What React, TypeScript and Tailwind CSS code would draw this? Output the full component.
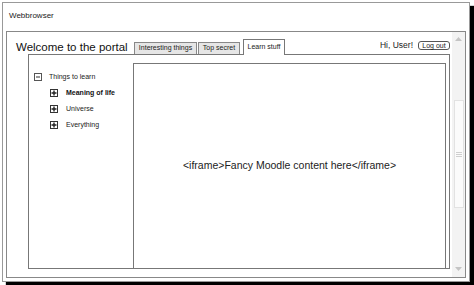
const font = { fontFamily: '"Liberation Sans", Arial, sans-serif' }

function MinusBox() {
  return (
    <svg width="8" height="8" viewBox="0 0 8 8" className="shrink-0">
      <rect x="0.5" y="0.5" width="7" height="7" fill="#fff" stroke="#555" />
      <path d="M2 4h4" stroke="#333" strokeWidth="1" />
    </svg>
  )
}

function PlusBox() {
  return (
    <svg width="8" height="8" viewBox="0 0 8 8" className="shrink-0">
      <rect x="0.5" y="0.5" width="7" height="7" fill="#fff" stroke="#333" />
      <path d="M1.5 4h5M4 1.5v5" stroke="#222" strokeWidth="1.4" />
    </svg>
  )
}

function Tab({ label, active, w }: { label: string; active?: boolean; w: string }) {
  if (active) {
    return (
      <div
        className={`${w} relative z-10 -mb-px flex h-[16px] items-center justify-center border border-b-0 border-[#777] bg-white text-[7px] text-[#222]`}
      >
        {label}
      </div>
    )
  }
  return (
    <div
      className={`${w} flex h-[12px] items-center justify-center border border-b-0 border-[#888] bg-[#e6e6e6] text-[7px] text-[#222]`}
    >
      {label}
    </div>
  )
}

const children = [
  { label: 'Meaning of life', bold: true },
  { label: 'Universe', bold: false },
  { label: 'Everything', bold: false },
]

export default function App() {
  return (
    <div className="h-[285px] w-[474px] overflow-hidden bg-white" style={font}>
      <div className="ml-[2px] mt-[2px] flex h-[280px] w-[468px] flex-col border border-[#999] bg-white shadow-[4px_4px_1px_0_#000]">
        {/* window title */}
        <div className="flex h-[28px] items-center pb-[2px] pl-[6px] text-[8px] text-[#222]">
          Webbrowser
        </div>

        {/* browser viewport */}
        <div className="mb-[3px] ml-[3px] flex h-[247px] w-[460px] border border-[#888]">
          <div className="flex flex-1 flex-col pb-[8px] pl-[21px] pr-[2px]">
            {/* header */}
            <div className="-ml-[21px] flex h-[22px] items-end">
              <div className="w-[127px] pl-[9px] text-[11.5px] leading-[14px] text-[#111]">
                Welcome to the portal
              </div>
              <div className="flex items-end">
                <Tab label="Interesting things" w="w-[63px]" />
                <div className="w-px" />
                <Tab label="Top secret" w="w-[42px]" />
                <div className="w-[3px]" />
                <Tab label="Learn stuff" w="w-[42px]" active />
              </div>
              <div className="mb-[2px] ml-auto flex items-center gap-[5px]">
                <span className="text-[8.5px] text-[#222]">Hi, User!</span>
                <button
                  type="button"
                  className="flex h-[9px] w-[32px] items-center justify-center rounded-[3px] border border-[#555] text-[7px] leading-none text-[#222]"
                >
                  Log out
                </button>
              </div>
            </div>

            {/* tab panel */}
            <div className="flex flex-1 border border-[#777] pr-[3px] pt-[8px]">
              <div className="-mt-[8px] w-[104px] pt-[14px] text-[7px] text-[#222]">
                <div className="flex h-[16px] items-center gap-[7px] pl-[5px]">
                  <MinusBox />
                  <span>Things to learn</span>
                </div>
                {children.map((c) => (
                  <div key={c.label} className="flex h-[16px] items-center gap-[8px] pl-[21px]">
                    <PlusBox />
                    <span className={c.bold ? 'font-bold text-[#111]' : ''}>{c.label}</span>
                  </div>
                ))}
              </div>
              <div className="flex flex-1 items-center justify-center border border-b-0 border-[#777] text-[10.5px] text-[#222]">
                {'<iframe>Fancy Moodle content here</iframe>'}
              </div>
            </div>
          </div>

          {/* scrollbar */}
          <div className="flex w-[13px] flex-col items-center bg-[#f3f3f3]">
            <svg width="7" height="4" viewBox="0 0 7 4" className="mt-[5px]">
              <path d="M0 4L3.5 0L7 4Z" fill="#c4c4c4" />
            </svg>
            <div className="mt-[59px] flex h-[108px] w-[10px] flex-col items-center justify-center gap-[1px] border border-[#e2e2e2] bg-[#fbfbfb]">
              <div className="h-px w-[6px] bg-[#cfcfcf]" />
              <div className="h-px w-[6px] bg-[#cfcfcf]" />
              <div className="h-px w-[6px] bg-[#cfcfcf]" />
            </div>
            <svg width="7" height="4" viewBox="0 0 7 4" className="mb-[6px] mt-auto">
              <path d="M0 0L3.5 4L7 0Z" fill="#c4c4c4" />
            </svg>
          </div>
        </div>
      </div>
    </div>
  )
}
